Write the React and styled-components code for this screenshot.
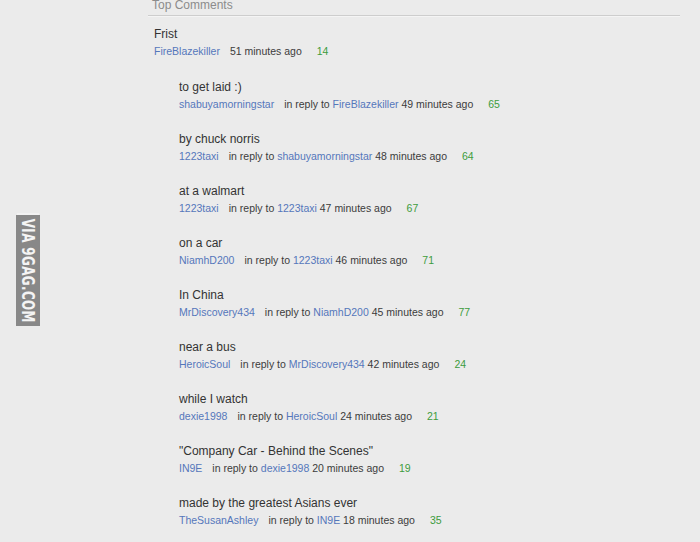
import React from "react";
import styled, { createGlobalStyle } from "styled-components";

const GlobalStyle = createGlobalStyle`
  html, body {
    margin: 0;
    padding: 0;
    background: #ebebeb;
  }
  body {
    font-family: "Liberation Sans", Arial, sans-serif;
    color: #333;
  }
`;

const Page = styled.div`
  position: relative;
  width: 700px;
  height: 542px;
  overflow: hidden;
  background: #ebebeb;
  padding-left: 148px;
  box-sizing: border-box;
`;

const Column = styled.div`
  width: 532px;
`;

const Header = styled.div`
  margin-top: -2px;
  padding-left: 4px;
  height: 17px;
  line-height: 14px;
  font-size: 12px;
  color: #8c8c8c;
  border-bottom: 1px solid #cdcdcd;
  box-shadow: 0 1px 0 #f4f4f4;
`;

const List = styled.div`
  display: flex;
  flex-direction: column;
  padding-top: 1px;
`;

const CommentBox = styled.div`
  padding: 8px 0 ${(p) => (p.$reply ? 10 : 11)}px ${(p) => (p.$reply ? 31 : 6)}px;
`;

const Body = styled.div`
  font-size: 12px;
  line-height: 18px;
  color: #333;
`;

const Meta = styled.div`
  font-size: 10.5px;
  line-height: 16px;
  color: #444;
  display: flex;
  align-items: baseline;
  white-space: nowrap;
`;

const User = styled.span`
  color: #5577bb;
`;

const Info = styled.span`
  margin-left: 10px;
  color: #3c3c3c;
`;

const Score = styled.span`
  margin-left: 15px;
  color: #3d9c3d;
`;

const Watermark = styled.div`
  position: absolute;
  left: 16px;
  top: 215px;
  width: 24px;
  height: 111px;
  background: #888;
  box-shadow: 0 -3px 0 -1px #f2f2f2;
  display: flex;
  align-items: center;
  justify-content: center;
  overflow: hidden;
`;

const WatermarkText = styled.span`
  writing-mode: vertical-rl;
  font-family: "Liberation Sans Narrow", "DejaVu Sans Condensed", sans-serif;
  font-weight: bold;
  font-size: 17px;
  letter-spacing: 0.5px;
  color: #f4f4f4;
  transform: scaleY(0.78);
  white-space: nowrap;
`;

const comments = [
  { text: "Frist", user: "FireBlazekiller", time: "51 minutes ago", score: 14 },
  { text: "to get laid :)", user: "shabuyamorningstar", to: "FireBlazekiller", time: "49 minutes ago", score: 65 },
  { text: "by chuck norris", user: "1223taxi", to: "shabuyamorningstar", time: "48 minutes ago", score: 64 },
  { text: "at a walmart", user: "1223taxi", to: "1223taxi", time: "47 minutes ago", score: 67 },
  { text: "on a car", user: "NiamhD200", to: "1223taxi", time: "46 minutes ago", score: 71 },
  { text: "In China", user: "MrDiscovery434", to: "NiamhD200", time: "45 minutes ago", score: 77 },
  { text: "near a bus", user: "HeroicSoul", to: "MrDiscovery434", time: "42 minutes ago", score: 24 },
  { text: "while I watch", user: "dexie1998", to: "HeroicSoul", time: "24 minutes ago", score: 21 },
  { text: "\"Company Car - Behind the Scenes\"", user: "IN9E", to: "dexie1998", time: "20 minutes ago", score: 19 },
  { text: "made by the greatest Asians ever", user: "TheSusanAshley", to: "IN9E", time: "18 minutes ago", score: 35 },
];

const Comment = ({ c }) => (
  <CommentBox $reply={!!c.to}>
    <Body>{c.text}</Body>
    <Meta>
      <User>{c.user}</User>
      {c.to ? (
        <Info>
          in reply to <User>{c.to}</User> {c.time}
        </Info>
      ) : (
        <Info>{c.time}</Info>
      )}
      <Score>{c.score}</Score>
    </Meta>
  </CommentBox>
);

export default function App() {
  return (
    <>
      <GlobalStyle />
      <Page>
        <Column>
          <Header>Top Comments</Header>
          <List>
            {comments.map((c, i) => (
              <Comment key={i} c={c} />
            ))}
          </List>
        </Column>
        <Watermark>
          <WatermarkText>VIA 9GAG.COM</WatermarkText>
        </Watermark>
      </Page>
    </>
  );
}
